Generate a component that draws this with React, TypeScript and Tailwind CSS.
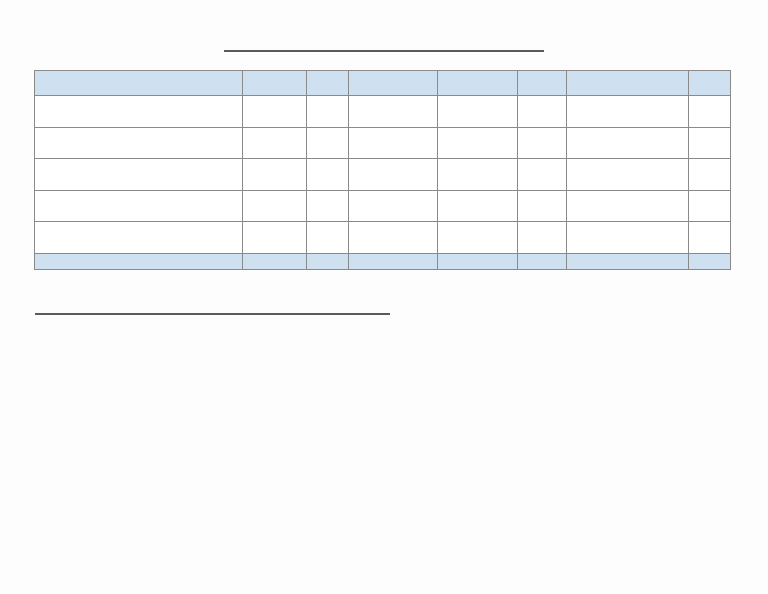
export default function App() {
    const cols = [208, 64, 42, 89, 80, 49, 122, 42];
    const rows = [32, 31, 32, 31, 32];

    return (
        <div className="min-h-[594px] w-[768px] bg-[#fdfdfd] pt-[50px]">
            {/* línea del título */}
            <div className="mx-auto h-[2px] w-[320px] bg-[#5a5a5a]" />

            <table className="ml-[34px] mt-[18px] w-[696px] table-fixed border-collapse border border-[#8a8a8a]">
                <colgroup>
                    {cols.map((w, i) => (
                        <col key={i} style={{ width: w }} />
                    ))}
                </colgroup>
                <thead>
                    <tr className="h-[25px] bg-[#cfe0f1]">
                        {cols.map((_, i) => (
                            <th key={i} className="border border-[#8a8a8a] p-0" />
                        ))}
                    </tr>
                </thead>
                <tbody>
                    {rows.map((h, r) => (
                        <tr key={r} className="bg-white" style={{ height: h }}>
                            {cols.map((_, i) => (
                                <td key={i} className="border border-[#8a8a8a] p-0" />
                            ))}
                        </tr>
                    ))}
                </tbody>
                <tfoot>
                    <tr className="h-[16px] bg-[#cfe0f1]">
                        {cols.map((_, i) => (
                            <td key={i} className="border border-[#8a8a8a] p-0" />
                        ))}
                    </tr>
                </tfoot>
            </table>

            {/* línea de firma */}
            <div className="ml-[35px] mt-[43px] h-[2px] w-[355px] bg-[#5a5a5a]" />
        </div>
    );
}
